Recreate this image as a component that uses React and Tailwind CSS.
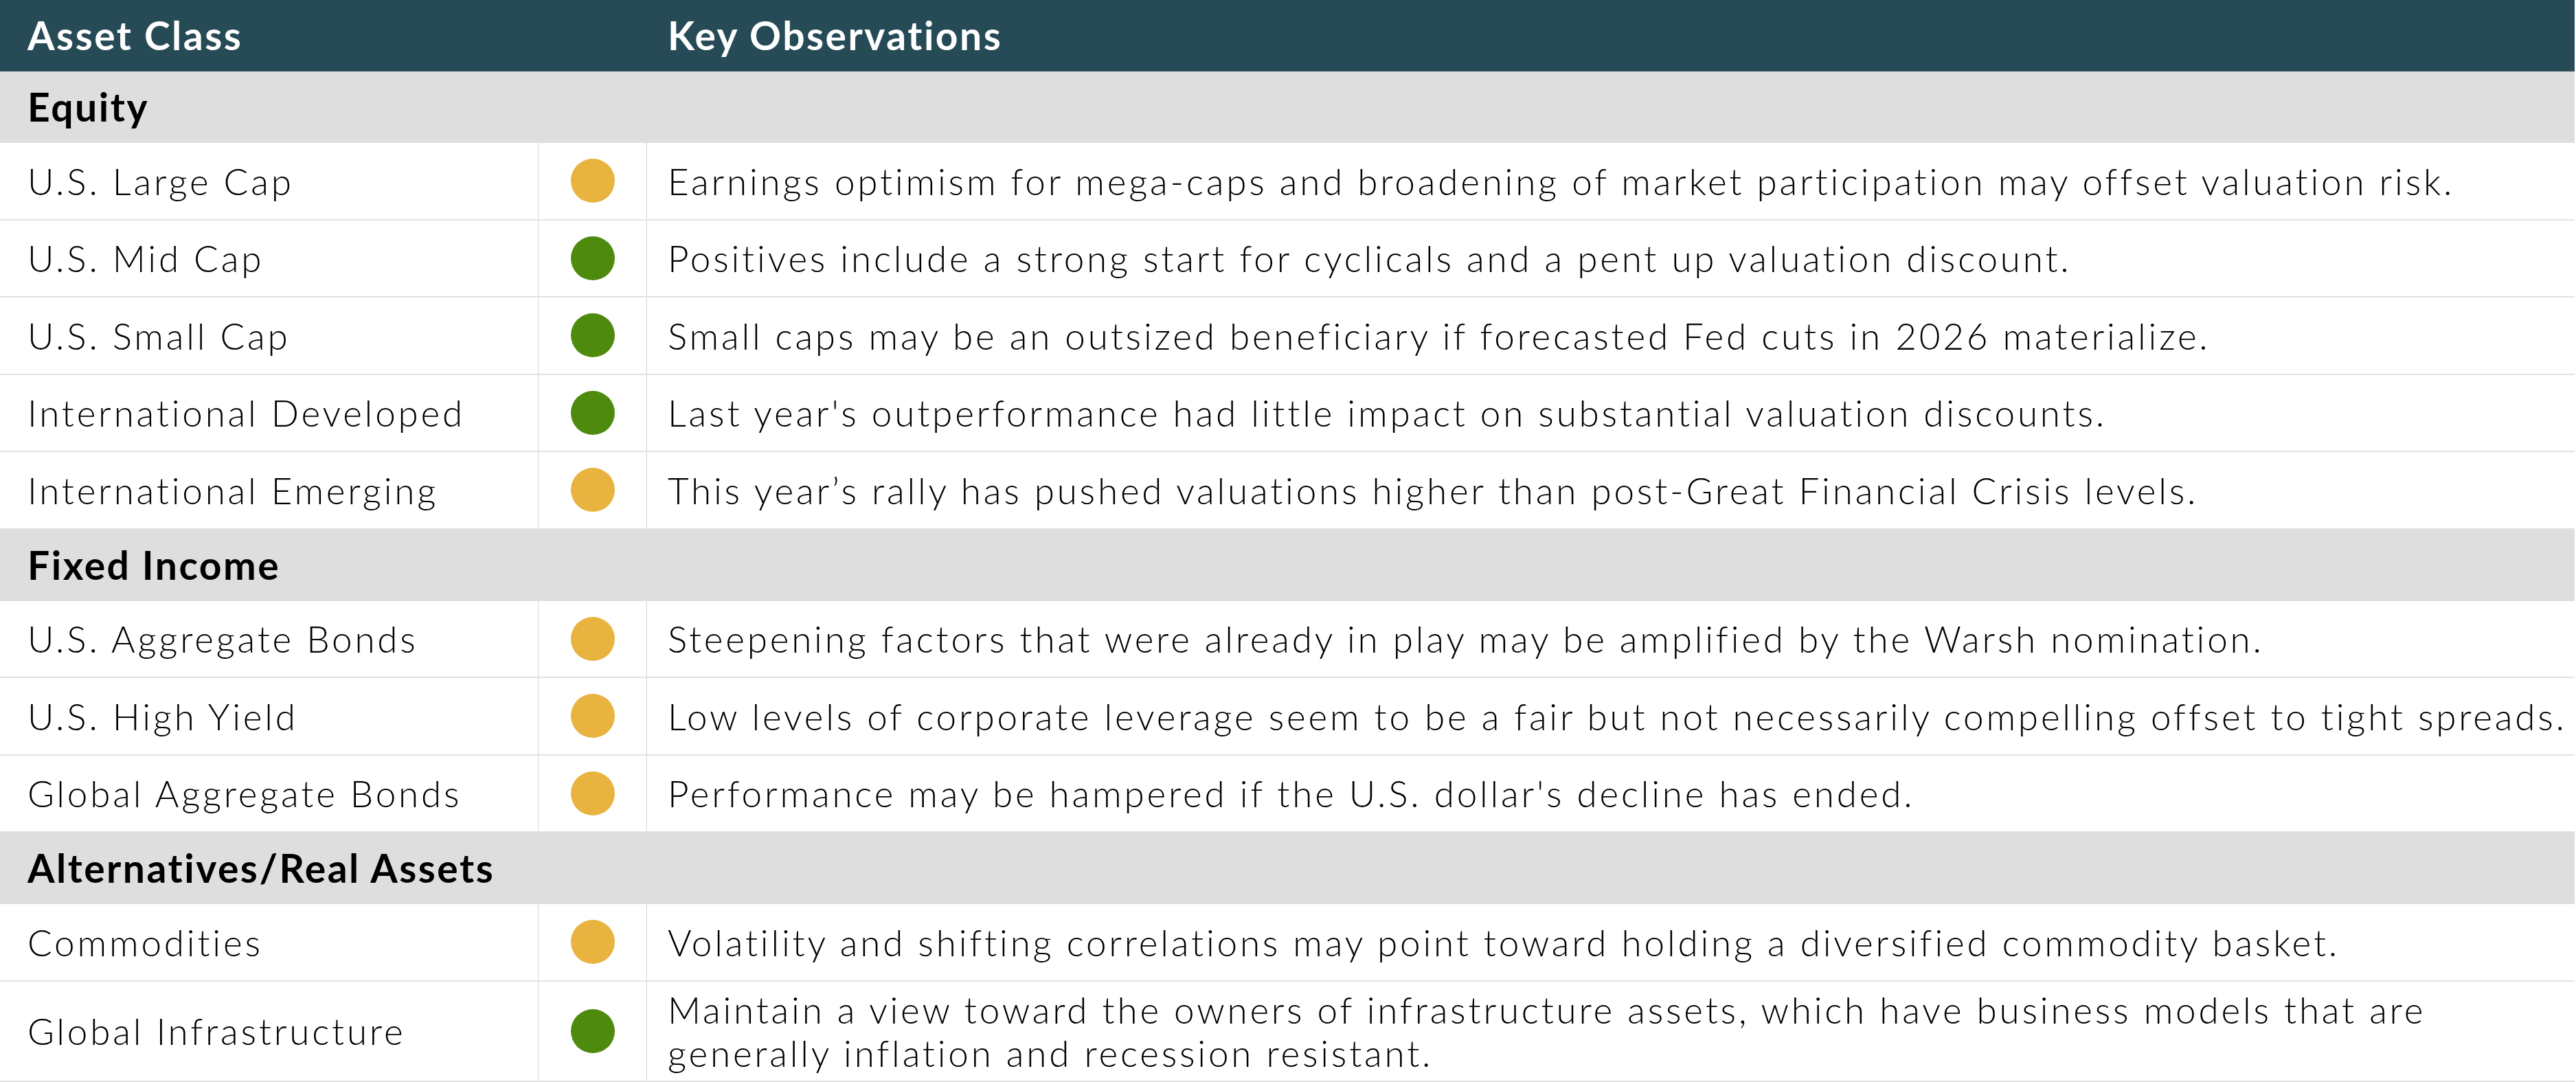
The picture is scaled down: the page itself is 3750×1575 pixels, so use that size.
const SECTIONS = [
  {
    title: "Equity",
    rows: [
      ["U.S. Large Cap", "yellow", "Earnings optimism for mega-caps and broadening of market participation may offset valuation risk."],
      ["U.S. Mid Cap", "green", "Positives include a strong start for cyclicals and a pent up valuation discount."],
      ["U.S. Small Cap", "green", "Small caps may be an outsized beneficiary if forecasted Fed cuts in 2026 materialize."],
      ["International Developed", "green", "Last year's outperformance had little impact on substantial valuation discounts."],
      ["International Emerging", "yellow", "This year\u2019s rally has pushed valuations higher than post-Great Financial Crisis levels."],
    ],
  },
  {
    title: "Fixed Income",
    rows: [
      ["U.S. Aggregate Bonds", "yellow", "Steepening factors that were already in play may be amplified by the Warsh nomination."],
      ["U.S. High Yield", "yellow", "Low levels of corporate leverage seem to be a fair but not necessarily compelling offset to tight spreads."],
      ["Global Aggregate Bonds", "yellow", "Performance may be hampered if the U.S. dollar's decline has ended."],
    ],
  },
  {
    title: "Alternatives/Real Assets",
    rows: [
      ["Commodities", "yellow", "Volatility and shifting correlations may point toward holding a diversified commodity basket."],
      [
        "Global Infrastructure",
        "green",
        <>
          Maintain a view toward the owners of infrastructure assets, which have business models that are
          <br />
          generally inflation and recession resistant.
        </>,
      ],
    ],
  },
];

function Dot({ tone }) {
  return (
    <span
      className={
        tone === "green"
          ? "block size-[64px] rounded-full bg-[#4e8a0e]"
          : "block size-[64px] rounded-full bg-[#e8b33f]"
      }
    />
  );
}

function DataRow({ name, tone, text }) {
  return (
    <div className="flex min-h-[112.5px] border-b-2 border-[#e2e2e2]">
      <div className="flex w-[783px] shrink-0 items-center pl-[40px]">{name}</div>
      <div className="flex w-[159px] shrink-0 items-center justify-center border-x border-[#d6d6d6]">
        <Dot tone={tone} />
      </div>
      <div className="flex flex-1 items-center py-[9px] pl-[30px] pr-[2px] leading-[63px]">
        <p className="whitespace-nowrap">{text}</p>
      </div>
    </div>
  );
}

export default function App() {
  return (
    <div className="w-[3748px] bg-white font-['Lato',sans-serif] text-[53px] font-light tracking-[3.8px] text-black">
      <div className="flex h-[104px] items-center bg-[#264b57] text-[57px] font-bold tracking-[2.5px] text-white">
        <div className="w-[942px] shrink-0 pl-[40px]">Asset Class</div>
        <div className="pl-[30px]">Key Observations</div>
      </div>
      {SECTIONS.map((section) => (
        <div key={section.title}>
          <div className="flex h-[104px] items-center bg-[#dedede] pl-[40px] text-[57px] font-bold tracking-[2.5px]">
            {section.title}
          </div>
          {section.rows.map(([name, tone, text]) => (
            <DataRow key={name} name={name} tone={tone} text={text} />
          ))}
        </div>
      ))}
    </div>
  );
}
